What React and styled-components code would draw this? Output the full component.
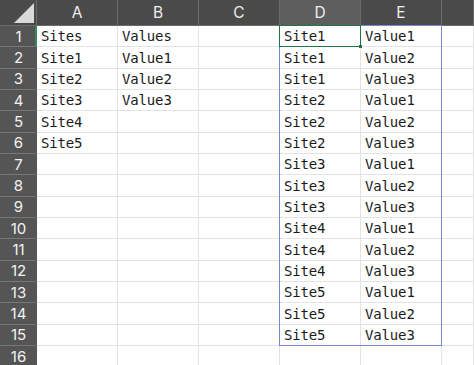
import styled, { createGlobalStyle } from "styled-components";

const GlobalStyle = createGlobalStyle`
  html, body {
    margin: 0;
    padding: 0;
    background: #ffffff;
    overflow: hidden;
  }
`;

const COL_W = 81;
const ROW_H = 21.35;
const HEAD_H = 26;
const ROWHEAD_W = 37;

const Sheet = styled.div`
  position: relative;
  display: grid;
  grid-template-columns: ${ROWHEAD_W}px repeat(5, ${COL_W}px) 1fr;
  grid-auto-rows: ${ROW_H}px;
  grid-template-rows: ${HEAD_H}px;
  width: 474px;
  height: 365px;
  overflow: hidden;
  font-family: "DejaVu Sans Mono", "Liberation Mono", monospace;
`;

const Corner = styled.div`
  background: #4a4a4a;
  border-right: 1px solid #6b6b6b;
  border-bottom: 1px solid #6b6b6b;
  box-sizing: border-box;
  display: flex;
  align-items: flex-end;
  justify-content: flex-end;
  padding: 0 2px 2px 0;
`;

const Triangle = styled.div`
  width: 0;
  height: 0;
  border-left: 20px solid transparent;
  border-bottom: 20px solid #d9d9d9;
`;

const ColHead = styled.div`
  background: ${(p) => (p.$active ? "#5e5e5e" : "#4a4a4a")};
  border-right: 1px solid #6b6b6b;
  border-bottom: 1px solid #6b6b6b;
  box-sizing: border-box;
  color: #eeeeee;
  font-family: Inter, "Liberation Sans", sans-serif;
  font-size: 15.5px;
  display: flex;
  align-items: center;
  justify-content: center;
`;

const RowHead = styled.div`
  background: #555555;
  border-bottom: 1px solid #777777;
  border-right: 2px solid ${(p) => (p.$active ? "#2e8b57" : "#555555")};
  box-sizing: border-box;
  color: #f2f2f2;
  font-family: Inter, "Liberation Sans", sans-serif;
  font-size: 15px;
  display: flex;
  align-items: center;
  justify-content: center;
  padding-left: 2px;
`;

const Cell = styled.div`
  border-right: 1px solid #e3e3e3;
  border-bottom: 1px solid #e3e3e3;
  box-sizing: border-box;
  color: #1a1a1a;
  font-size: 14px;
  letter-spacing: -0.15px;
  padding-left: 4px;
  display: flex;
  align-items: center;
  white-space: nowrap;
  overflow: hidden;
`;

const RangeBox = styled.div`
  position: absolute;
  left: ${ROWHEAD_W + COL_W * 3 - 1}px;
  top: ${HEAD_H - 1}px;
  width: ${COL_W * 2 + 1}px;
  height: ${ROW_H * 15 + 1}px;
  border: 1px solid #7487d4;
  box-sizing: border-box;
  pointer-events: none;
`;

const ActiveCell = styled.div`
  position: absolute;
  left: ${ROWHEAD_W + COL_W * 3 - 1}px;
  top: ${HEAD_H - 1}px;
  width: ${COL_W + 1}px;
  height: ${ROW_H + 1}px;
  border: 1px solid #217346;
  box-sizing: border-box;
  pointer-events: none;
`;

const Handle = styled.div`
  position: absolute;
  right: -2px;
  bottom: -2px;
  width: 3px;
  height: 3px;
  background: #217346;
`;

const cols = ["A", "B", "C", "D", "E", ""];

const left = [
  ["Sites", "Values"],
  ["Site1", "Value1"],
  ["Site2", "Value2"],
  ["Site3", "Value3"],
  ["Site4", ""],
  ["Site5", ""],
];

const pairs = [];
for (let s = 1; s <= 5; s++) {
  for (let v = 1; v <= 3; v++) {
    pairs.push(["Site" + s, "Value" + v]);
  }
}

function App() {
  const rows = [];
  for (let r = 0; r < 16; r++) {
    const l = left[r] || ["", ""];
    const p = pairs[r] || ["", ""];
    rows.push([l[0], l[1], "", p[0], p[1], ""]);
  }

  return (
    <>
      <GlobalStyle />
      <Sheet>
        <Corner>
          <Triangle />
        </Corner>
        {cols.map((c, i) => (
          <ColHead key={i} $active={c === "D"}>
            {c}
          </ColHead>
        ))}
        {rows.map((row, r) => [
          <RowHead key={"h" + r} $active={r === 0}>
            {r + 1}
          </RowHead>,
          ...row.map((v, c) => <Cell key={r + "-" + c}>{v}</Cell>),
        ])}
        <RangeBox />
        <ActiveCell>
          <Handle />
        </ActiveCell>
      </Sheet>
    </>
  );
}

export default App;
